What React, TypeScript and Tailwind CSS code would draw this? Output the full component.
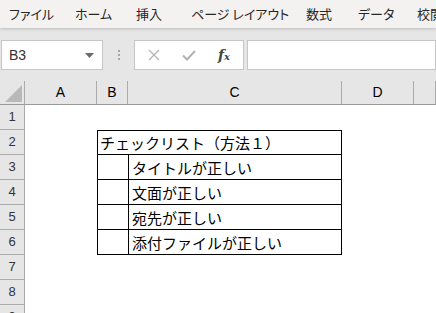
import React from "react";

const tabs = [
  { label: "ファイル", w: "w-[66px]" },
  { label: "ホーム", w: "w-[61px]" },
  { label: "挿入", w: "w-[55px]" },
  { label: "ページ レイアウト", w: "w-[115px]" },
  { label: "数式", w: "w-[52px]" },
  { label: "データ", w: "w-[59px]" },
  { label: "校閲", w: "w-[40px]" },
];

const cols = ["A", "B", "C", "D", ""];
const items = ["タイトルが正しい", "文面が正しい", "宛先が正しい", "添付ファイルが正しい"];

const jp = "font-['Noto_Sans_CJK_JP','Noto_Sans',sans-serif]";
const grid = "grid grid-cols-[25px_72px_31px_214px_72px_1fr]";

function RowHead({ n }: { n: number }) {
  return (
    <div className="flex h-[25px] items-center justify-center border-r border-b border-[#ababab] bg-[#e6e6e6] text-[13px] text-[#333] font-['Liberation_Sans',sans-serif]">
      {n}
    </div>
  );
}

export default function App() {
  return (
    <div className={`h-[313px] w-[436px] overflow-hidden bg-[#e6e6e6] ${jp}`}>
      {/* Ribbon tabs */}
      <div className="relative z-10 flex h-[28px] items-center whitespace-nowrap bg-[#f3f2f1] pl-[9px] text-[13px] text-[#262626] [font-feature-settings:'palt'] shadow-[0_1px_3px_rgba(0,0,0,0.18)]">
        {tabs.map((t) => (
          <div key={t.label} className={`${t.w} shrink-0 overflow-hidden`}>
            {t.label}
          </div>
        ))}
      </div>

      {/* Formula bar */}
      <div className="flex h-[53px] items-start pt-[12px]">
        <div className="ml-[1px] flex h-[30px] w-[102px] items-center justify-between border border-[#c6c6c6] bg-white pl-[7px] pr-[8px]">
          <span className="text-[14px] text-[#333] font-['Liberation_Sans',sans-serif]">B3</span>
          <svg width="9" height="5" viewBox="0 0 9 5">
            <path d="M0 0h9L4.5 5z" fill="#6b6b6b" />
          </svg>
        </div>
        <div className="flex h-[30px] w-[31px] flex-col items-center justify-center gap-[2px]">
          <span className="h-[2px] w-[2px] bg-[#a6a6a6]" />
          <span className="h-[2px] w-[2px] bg-[#a6a6a6]" />
          <span className="h-[2px] w-[2px] bg-[#a6a6a6]" />
        </div>
        <div className="flex h-[30px] w-[110px] items-center border border-[#c6c6c6] bg-white pl-[13px]">
          <svg width="12" height="12" viewBox="0 0 12 12">
            <path d="M1 1l10 10M11 1L1 11" stroke="#b3b3b3" strokeWidth="1.3" />
          </svg>
          <svg className="ml-[22px]" width="14" height="11" viewBox="0 0 14 11">
            <path d="M1 5.5l4 4L13 1" stroke="#b3b3b3" strokeWidth="2" fill="none" />
          </svg>
          <span className="ml-[22px] font-['DejaVu_Serif',serif] text-[14px] font-bold italic text-[#444]">
            f<span className="text-[10px]">x</span>
          </span>
        </div>
        <div className="ml-[3px] h-[30px] flex-1 border border-[#c6c6c6] bg-white" />
      </div>

      {/* Column headers */}
      <div className={`${grid} h-[24px] border-b border-[#9b9b9b] bg-[#e6e6e6] text-[14px] text-black font-['Liberation_Sans',sans-serif]`}>
        <div className="flex items-end justify-end border-r border-[#ababab] pr-[2px] pb-[2px]">
          <svg width="17" height="17" viewBox="0 0 17 17">
            <path d="M17 0V17H0z" fill="#b9b9b9" />
          </svg>
        </div>
        {cols.map((c, i) => (
          <div key={i} className="flex items-center justify-center border-r border-[#ababab]">
            {c}
          </div>
        ))}
      </div>

      {/* Sheet */}
      <div className="bg-white text-[15px] text-black">
        <div className={grid}>
          <RowHead n={1} />
          <div className="col-span-5" />
        </div>
        <div className={grid}>
          <RowHead n={2} />
          <div />
          <div className="col-span-2 flex h-[25px] items-center border border-black pl-[2px] leading-none">
            チェックリスト（方法１）
          </div>
          <div className="col-span-2" />
        </div>
        {items.map((t, i) => (
          <div key={t} className={grid}>
            <RowHead n={i + 3} />
            <div />
            <div className="h-[25px] border-l border-b border-black" />
            <div className="flex h-[25px] items-center border-x border-b border-black pl-[3px] leading-none">
              {t}
            </div>
            <div className="col-span-2" />
          </div>
        ))}
        {[7, 8, 9].map((n) => (
          <div key={n} className={grid}>
            <RowHead n={n} />
            <div className="col-span-5" />
          </div>
        ))}
      </div>
    </div>
  );
}
